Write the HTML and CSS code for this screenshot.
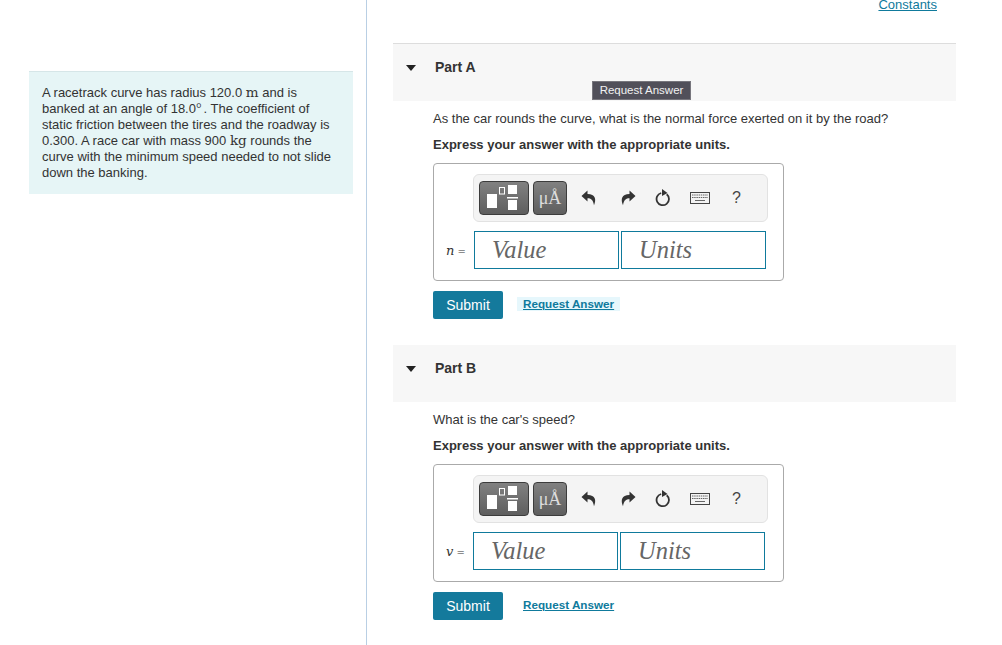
FILE: index.html

```html
<!DOCTYPE html>
<html lang="en">
<head>
    <meta charset="UTF-8">
    <title>Racetrack curve</title>
    <link rel="stylesheet" href="styles.css">
</head>
<body>
    <div class="page">
        <div class="left-col">
            <div class="intro">
                A racetrack curve has radius 120.0 <span class="math">m</span> and is
                banked at an angle of 18.0<span class="deg">°</span>. The coefficient of
                static friction between the tires and the roadway is
                0.300. A race car with mass 900 <span class="math">kg</span> rounds the
                curve with the minimum speed needed to not slide
                down the banking.
            </div>
        </div>

        <div class="right-col">
            <div class="top-link"><a href="#">Constants</a></div>

            <div class="part part-a">
                <div class="part-head">
                    <span class="arrow"></span>
                    <span class="part-title">Part A</span>
                    <span class="tooltip">Request Answer</span>
                </div>
                <div class="part-body">
                    <p class="question">As the car rounds the curve, what is the normal force exerted on it by the road?</p>
                    <p class="instruction">Express your answer with the appropriate units.</p>
                    <div class="answer-box">
                        <div class="toolbar">
                            <button class="tool-btn tmpl-btn">
                                <svg width="40" height="26" viewBox="0 0 40 26">
                                    <rect x="3" y="9" width="10" height="14" fill="#fff"/>
                                    <rect x="15.500" y="2.500" width="5" height="6.500" fill="none" stroke="#fff"/>
                                    <rect x="24" y="0" width="9" height="9" fill="#fff"/>
                                    <rect x="23" y="12" width="11" height="1.500" fill="#fff"/>
                                    <rect x="24" y="15" width="9" height="10" fill="#fff"/>
                                </svg>
                            </button>
                            <button class="tool-btn unit-btn">μÅ</button>
                            <svg class="tool-icon undo" width="16" height="16" viewBox="0 0 16 16"><path d="M6.500 .5 .5 6l6 5.500V8.300c3.500 0 5.500 1.500 6.500 7 2.500-6 1.500-11.300-6.500-11.300z" fill="#333"/></svg>
                            <svg class="tool-icon redo" width="16" height="16" viewBox="0 0 16 16"><path d="M9.500 .5l6 5.500-6 5.500V8.300c-3.500 0-5.500 1.500-6.500 7C.5 9.300 1.500 4 9.500 4z" fill="#333"/></svg>
                            <svg class="tool-icon reset" width="16" height="19" viewBox="0 0 16 19"><path d="M11.700 5.200A6.200 6.200 0 1 1 6.200 4" fill="none" stroke="#333" stroke-width="1.800"/><path d="M7 0 12.500 4 7 7z" fill="#333"/></svg>
                            <svg class="tool-icon keys" width="20" height="12" viewBox="0 0 20 12">
                                <rect x="0.500" y="0.500" width="19" height="11" fill="#f3f3f3" stroke="#444"/>
                                <path d="M2 3h16M2 5.500h16" stroke="#666" stroke-dasharray="1.500 .7"/>
                                <path d="M5 8.500h10" stroke="#666"/>
                            </svg>
                            <span class="help">?</span>
                        </div>
                        <div class="input-row">
                            <span class="var"><i>n</i> =</span>
                            <div class="field">Value</div>
                            <div class="field">Units</div>
                        </div>
                    </div>
                    <div class="actions">
                        <button class="submit">Submit</button>
                        <a href="#" class="request hilite">Request Answer</a>
                    </div>
                </div>
            </div>

            <div class="part part-b">
                <div class="part-head">
                    <span class="arrow"></span>
                    <span class="part-title">Part B</span>
                </div>
                <div class="part-body">
                    <p class="question">What is the car's speed?</p>
                    <p class="instruction">Express your answer with the appropriate units.</p>
                    <div class="answer-box">
                        <div class="toolbar">
                            <button class="tool-btn tmpl-btn">
                                <svg width="40" height="26" viewBox="0 0 40 26">
                                    <rect x="3" y="9" width="10" height="14" fill="#fff"/>
                                    <rect x="15.500" y="2.500" width="5" height="6.500" fill="none" stroke="#fff"/>
                                    <rect x="24" y="0" width="9" height="9" fill="#fff"/>
                                    <rect x="23" y="12" width="11" height="1.500" fill="#fff"/>
                                    <rect x="24" y="15" width="9" height="10" fill="#fff"/>
                                </svg>
                            </button>
                            <button class="tool-btn unit-btn">μÅ</button>
                            <svg class="tool-icon undo" width="16" height="16" viewBox="0 0 16 16"><path d="M6.500 .5 .5 6l6 5.500V8.300c3.500 0 5.500 1.500 6.500 7 2.500-6 1.500-11.300-6.500-11.300z" fill="#333"/></svg>
                            <svg class="tool-icon redo" width="16" height="16" viewBox="0 0 16 16"><path d="M9.500 .5l6 5.500-6 5.500V8.300c-3.500 0-5.500 1.500-6.500 7C.5 9.300 1.500 4 9.500 4z" fill="#333"/></svg>
                            <svg class="tool-icon reset" width="16" height="19" viewBox="0 0 16 19"><path d="M11.700 5.200A6.200 6.200 0 1 1 6.200 4" fill="none" stroke="#333" stroke-width="1.800"/><path d="M7 0 12.500 4 7 7z" fill="#333"/></svg>
                            <svg class="tool-icon keys" width="20" height="12" viewBox="0 0 20 12">
                                <rect x="0.500" y="0.500" width="19" height="11" fill="#f3f3f3" stroke="#444"/>
                                <path d="M2 3h16M2 5.500h16" stroke="#666" stroke-dasharray="1.500 .7"/>
                                <path d="M5 8.500h10" stroke="#666"/>
                            </svg>
                            <span class="help">?</span>
                        </div>
                        <div class="input-row">
                            <span class="var"><i>v</i> =</span>
                            <div class="field">Value</div>
                            <div class="field">Units</div>
                        </div>
                    </div>
                    <div class="actions">
                        <button class="submit">Submit</button>
                        <a href="#" class="request">Request Answer</a>
                    </div>
                </div>
            </div>
        </div>
    </div>
</body>
</html>
```

FILE: styles.css

```css
html, body {
    margin: 0;
    padding: 0;
    height: 645px;
    overflow: hidden;
    background-color: #fff;
    font-family: "Liberation Sans", Arial, sans-serif;
    color: #333;
}
.page {
    display: flex;
    height: 645px;
}
.left-col {
    width: 367px;
    box-sizing: border-box;
    border-right: 1px solid #b9cfe4;
    padding: 71px 13px 0 29px;
    flex-shrink: 0;
}
.intro {
    background-color: #e6f5f6;
    border-top: 1px solid #d6e6e8;
    padding: 13px;
    font-size: 13px;
    line-height: 16px;
    height: 96px;
}
.math {
    font-family: "DejaVu Serif", "Liberation Serif", serif;
    font-size: 13.5px;
    line-height: 0;
}
.deg {
    font-family: "Liberation Serif", serif;
    font-size: 14px;
    line-height: 0;
    padding-right: 2px;
}
.right-col {
    flex: 1;
    padding-left: 26px;
    padding-right: 46px;
}
.top-link {
    height: 46px;
    box-sizing: border-box;
    margin-top: -3px;
    padding-right: 19px;
    text-align: right;
    font-size: 13px;
    line-height: 16px;
}
.top-link a {
    color: #0f7a9c;
}
.part-head {
    position: relative;
    display: flex;
    align-items: flex-start;
    background-color: #f7f7f7;
}
.part-a .part-head {
    height: 57px;
    border-top: 1px solid #ddd;
}
.part-b {
    margin-top: 26px;
}
.part-b .part-head {
    height: 57px;
}
.arrow {
    width: 0;
    height: 0;
    margin: 21px 0 0 13px;
    border-left: 5.5px solid transparent;
    border-right: 5.5px solid transparent;
    border-top: 6px solid #222;
}
.part-title {
    margin: 15px 0 0 19px;
    font-size: 14px;
    line-height: 16px;
    font-weight: bold;
}
.tooltip {
    position: absolute;
    left: 199px;
    top: 37px;
    width: 99px;
    height: 19px;
    box-sizing: border-box;
    background-color: #51505a;
    border: 1px solid #77767d;
    color: #f2f2f2;
    font-size: 11.5px;
    line-height: 17px;
    text-align: center;
}
.part-body {
    padding-left: 40px;
}
.question {
    margin: 0;
    padding-top: 10px;
    font-size: 13px;
    line-height: 16px;
}
.instruction {
    margin: 10px 0 0;
    font-size: 13px;
    line-height: 16px;
    font-weight: bold;
}
.answer-box {
    width: 351px;
    height: 118px;
    box-sizing: border-box;
    margin-top: 10px;
    border: 1px solid #aaa;
    border-radius: 4px;
    padding: 10px 0 0 39px;
}
.toolbar {
    display: flex;
    align-items: center;
    width: 295px;
    height: 48px;
    box-sizing: border-box;
    background-color: #f4f4f4;
    border: 1px solid #e2e2e2;
    border-radius: 6px;
    padding-left: 5px;
}
.tool-btn {
    height: 34px;
    box-sizing: border-box;
    padding: 0;
    border: 1px solid #3c3c3c;
    border-radius: 4px;
    background: linear-gradient(#818181, #5e5e5e);
    display: flex;
    align-items: center;
    justify-content: center;
}
.tmpl-btn {
    width: 50px;
    margin-right: 4px;
}
.unit-btn {
    width: 34px;
    color: #ddd;
    font-family: "Liberation Serif", serif;
    font-size: 18px;
}
.tool-icon {
    flex-shrink: 0;
}
.undo {
    margin-left: 14px;
}
.redo {
    margin-left: 23px;
}
.reset {
    margin-left: 19px;
}
.keys {
    margin-left: 19px;
}
.help {
    margin-left: 22px;
    font-size: 16px;
    color: #444;
}
.input-row {
    display: flex;
    align-items: center;
    margin-top: 9px;
    margin-left: -39px;
}
.part-b .input-row {
    margin-left: -40px;
}
.var {
    width: 40px;
    box-sizing: border-box;
    padding-right: 8px;
    text-align: right;
    font-family: "DejaVu Serif", "Liberation Serif", serif;
    font-size: 10px;
    white-space: nowrap;
}
.var i {
    font-size: 13px;
}
.field {
    width: 145px;
    height: 38px;
    box-sizing: border-box;
    margin-right: 2px;
    border: 1px solid #0f7a9c;
    padding-left: 17px;
    font-family: "Liberation Serif", serif;
    font-style: italic;
    font-size: 24.5px;
    line-height: 36px;
    color: #666;
    background-color: #fff;
}
.actions {
    display: flex;
    align-items: center;
    margin-top: 10px;
}
.submit {
    width: 70px;
    height: 28px;
    padding: 0;
    border: none;
    border-radius: 2px;
    background-color: #147a9c;
    color: #fff;
    font-family: "Liberation Sans", Arial, sans-serif;
    font-size: 14px;
    font-weight: normal;
}
.request {
    margin-left: 14px;
    padding: 0 6px;
    margin-top: -2px;
    font-size: 11.7px;
    line-height: 14px;
    font-weight: bold;
    color: #0f7a9c;
}
.hilite {
    background-color: #e6f7fc;
}
```
